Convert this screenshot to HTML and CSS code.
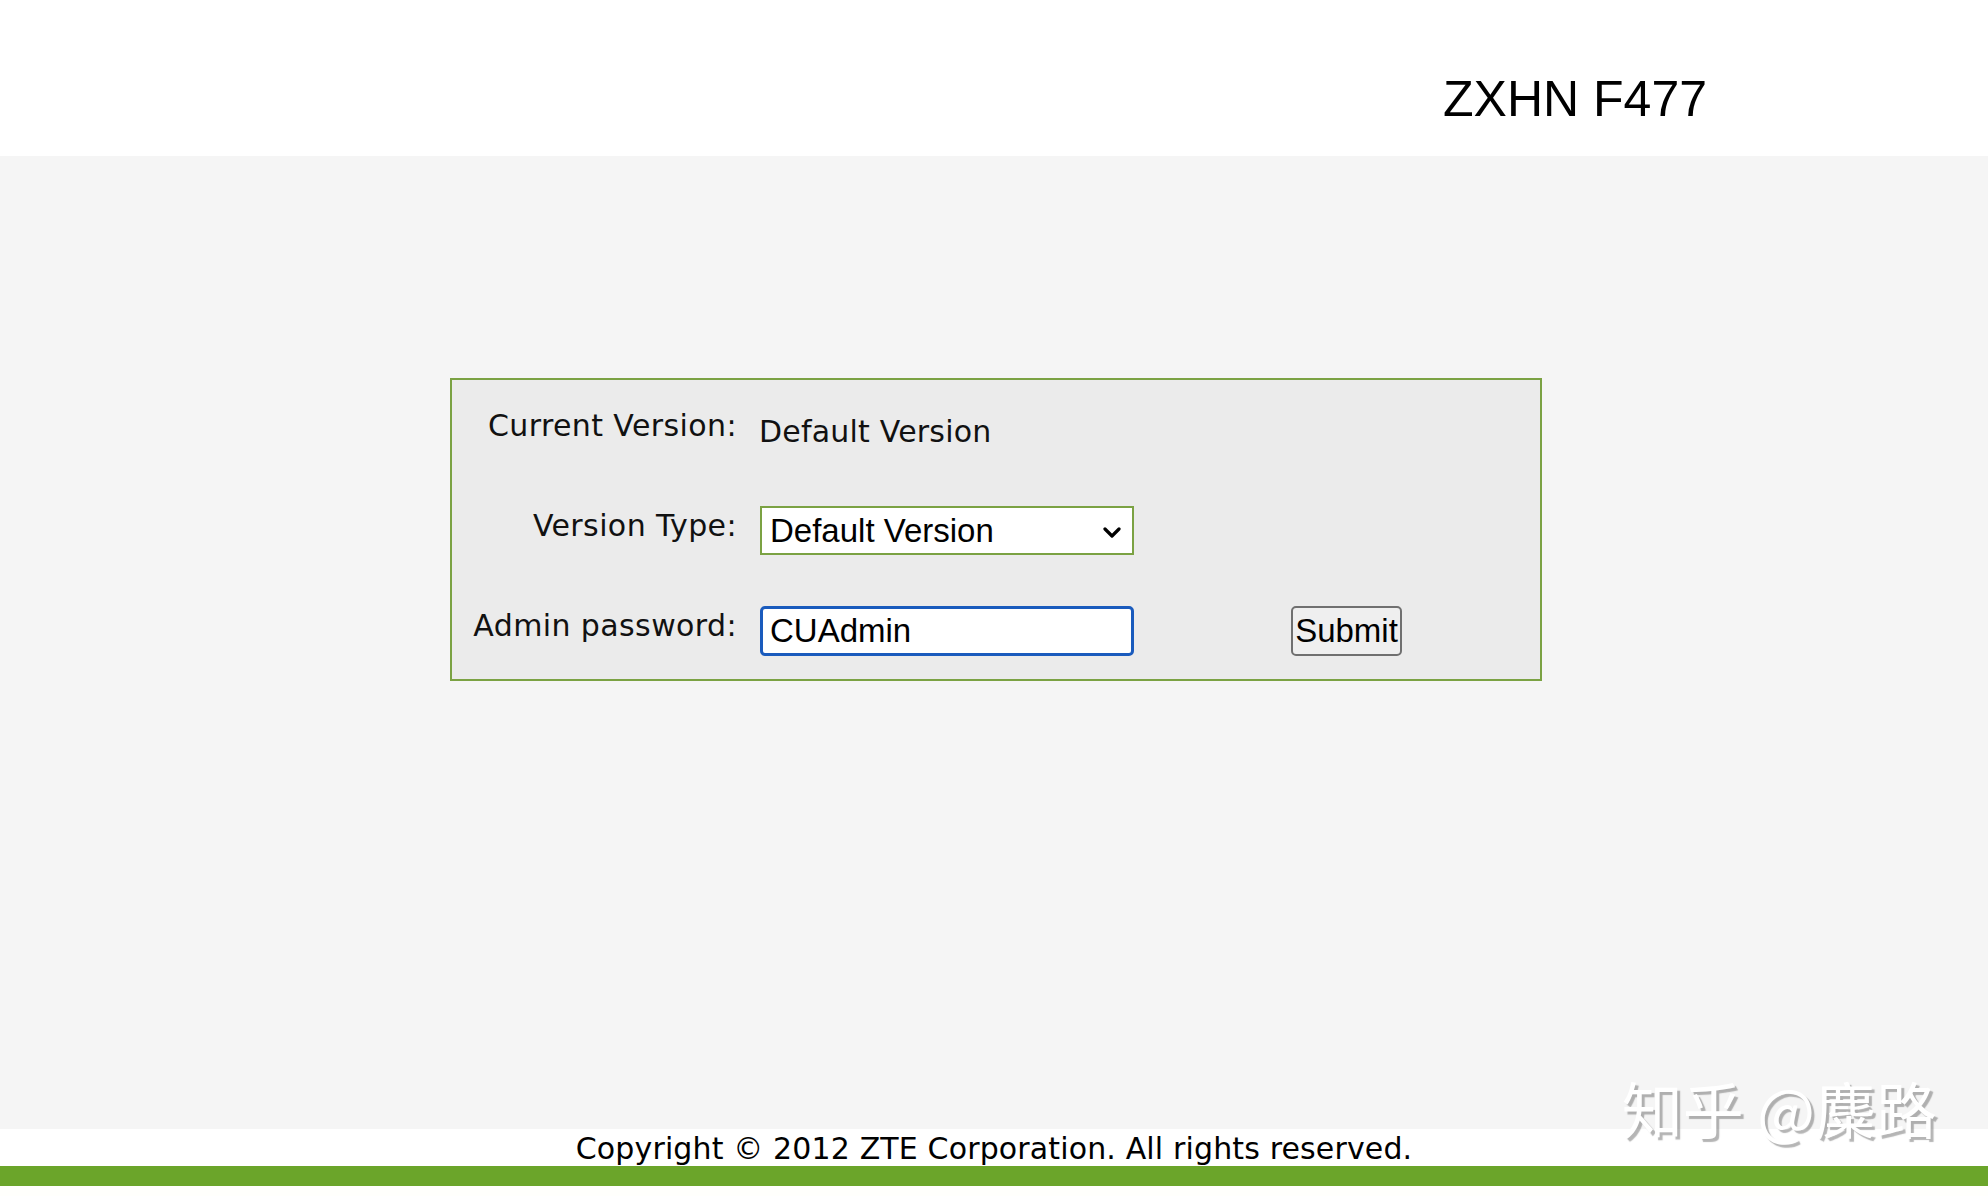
FILE: index.html
```html
<!DOCTYPE html>
<html lang="en">
<head>
<meta charset="utf-8">
<title>ZXHN F477</title>
<link rel="stylesheet" href="styles.css">
</head>
<body>
<header class="top">
  <h1 class="model">ZXHN F477</h1>
</header>
<main class="stage">
  <form class="panel">
    <div class="row">
      <span class="label">Current Version:</span>
      <span class="value">Default Version</span>
    </div>
    <div class="row">
      <label class="label" for="vt">Version Type:</label>
      <span class="select-wrap">
        <select id="vt" class="select"><option>Default Version</option></select>
        <svg class="chev" width="18" height="11" viewBox="0 0 18 11"><path d="M2 2 L9 9 L16 2" fill="none" stroke="#000" stroke-width="3.2" stroke-linecap="round" stroke-linejoin="round"/></svg>
      </span>
    </div>
    <div class="row">
      <label class="label" for="pw">Admin password:</label>
      <input id="pw" class="pwd" type="text" value="CUAdmin">
      <button type="button" class="submit">Submit</button>
    </div>
  </form>
</main>
<footer class="foot">
  <div class="copy">Copyright © 2012 ZTE Corporation. All rights reserved.</div>
  <div class="bar"></div>
  <div class="tail"></div>
</footer>
<div class="watermark">知乎 @麋路</div>
</body>
</html>
```

FILE: styles.css
```css
html, body {
  margin: 0;
  padding: 0;
}
body {
  position: relative;
  width: 1988px;
  height: 1196px;
  overflow: hidden;
  background: #ffffff;
  font-family: "DejaVu Sans", Verdana, sans-serif;
  color: #000;
}
.top {
  height: 156px;
  box-sizing: border-box;
  padding: 74px 281px 0 0;
  display: flex;
  justify-content: flex-end;
  background: #ffffff;
}
.model {
  margin: 0;
  font-family: "Liberation Sans", Arial, sans-serif;
  font-weight: normal;
  font-size: 50px;
  line-height: 50px;
  color: #000;
}
.stage {
  height: 973px;
  box-sizing: border-box;
  padding-top: 222px;
  background: #f5f5f5;
}
.panel {
  width: 1092px;
  box-sizing: border-box;
  margin: 0 0 0 450px;
  border: 2px solid #7ba243;
  background: #ebebeb;
}
.row {
  display: flex;
  align-items: flex-start;
  height: 100px;
}
.row:last-child {
  height: 99px;
}
.label {
  flex: none;
  width: 285px;
  text-align: right;
  margin-top: 28px;
  font-size: 30px;
  line-height: 36px;
  letter-spacing: 0.4px;
  color: #111;
}
.value {
  margin-left: 22px;
  margin-top: 34px;
  font-size: 30px;
  line-height: 36px;
  letter-spacing: 0.2px;
  color: #111;
}
.select-wrap {
  position: relative;
  display: block;
  margin-left: 23px;
  margin-top: 26px;
  width: 374px;
  height: 49px;
}
.select {
  -webkit-appearance: none;
  appearance: none;
  display: block;
  width: 374px;
  height: 49px;
  box-sizing: border-box;
  margin: 0;
  border: 2px solid #7ba243;
  border-radius: 0;
  background: #ffffff;
  padding: 0 40px 0 8px;
  font-family: "Liberation Sans", Arial, sans-serif;
  font-size: 33px;
  color: #000;
  outline: none;
}
.chev {
  position: absolute;
  right: 13px;
  top: 21px;
  pointer-events: none;
}
.pwd {
  display: block;
  margin: 26px 0 0 23px;
  width: 374px;
  height: 50px;
  box-sizing: border-box;
  border: 3px solid #1a5bbd;
  border-radius: 5px;
  background: #ffffff;
  padding: 0 7px;
  font-family: "Liberation Sans", Arial, sans-serif;
  font-size: 33px;
  color: #000;
  outline: none;
}
.submit {
  display: block;
  margin: 26px 0 0 157px;
  width: 111px;
  height: 50px;
  box-sizing: border-box;
  border: 2px solid #707070;
  border-radius: 5px;
  background: #efefef;
  padding: 0;
  font-family: "Liberation Sans", Arial, sans-serif;
  font-size: 33px;
  color: #000;
}
.foot {
  background: #ffffff;
}
.copy {
  height: 37px;
  overflow: hidden;
  text-align: center;
  font-size: 30px;
  line-height: 40px;
  letter-spacing: 0.14px;
  color: #000;
}
.bar {
  height: 20px;
  background: #6ba52a;
}
.tail {
  height: 10px;
  background: #fffffc;
}
.watermark {
  position: absolute;
  right: 51px;
  top: 1071px;
  font-family: "Noto Sans CJK SC", sans-serif;
  font-size: 61px;
  line-height: 74px;
  color: #ffffff;
  text-shadow: 3px 3px 1px rgba(90, 90, 90, 0.45);
  white-space: nowrap;
}
```
